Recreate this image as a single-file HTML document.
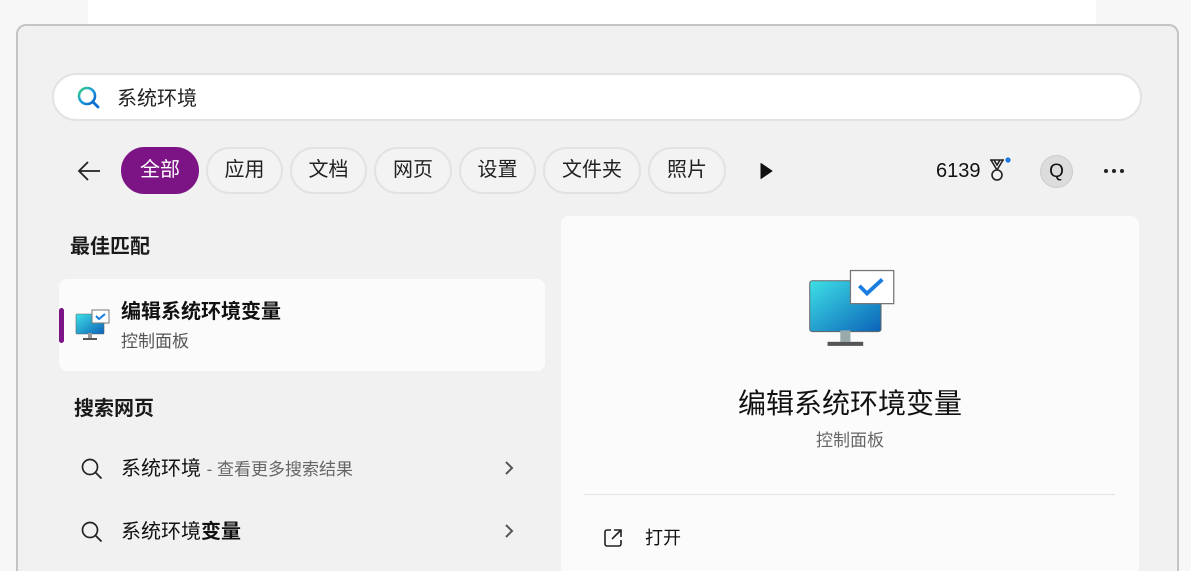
<!DOCTYPE html>
<html><head><meta charset="utf-8"><style>
*{margin:0;padding:0;box-sizing:border-box}
html,body{width:1191px;height:571px;overflow:hidden}
body{background:#f7f7f7;font-family:"Liberation Sans","Noto Sans CJK SC",sans-serif;position:relative;color:#1a1a1a}
.abs{position:absolute}
.topwhite{left:88px;top:0;width:1008px;height:24px;background:#fff}
.panel{left:16px;top:24px;width:1163px;height:547px;background:#f1f1f1;border:2px solid #c4c4c4;border-bottom:none;border-radius:10px 10px 0 0}
.search{left:52px;top:73px;width:1090px;height:48px;background:#fff;border:2px solid #e3e3e3;border-radius:24px}
.chip{top:147px;height:47px;border:2px solid #e2e2e2;border-radius:24px;background:#f3f3f3;font-size:20px;line-height:43px;text-align:center;color:#222}
.card{background:#fbfbfb;border-radius:8px}
.h{font-weight:bold;font-size:20px}
</style></head><body>
<div class="abs topwhite"></div>
<div class="abs panel"></div>
<div class="abs search"></div>
<svg class="abs" style="left:76px;top:85px" width="26" height="26" viewBox="0 0 26 26"><defs><linearGradient id="sg" x1="0" y1="0" x2="1" y2="1"><stop offset="0" stop-color="#3ad17a"/><stop offset="0.5" stop-color="#1a9ae0"/><stop offset="1" stop-color="#0a5fc0"/></linearGradient></defs><circle cx="11" cy="11" r="8" fill="none" stroke="url(#sg)" stroke-width="2.6"/><path d="M17 17l5 5" stroke="#0a6fd0" stroke-width="2.8" stroke-linecap="round"/></svg>
<div class="abs" style="left:117px;top:82px;font-size:20px;color:#222">系统环境</div>

<svg class="abs" style="left:76px;top:158px" width="26" height="26" viewBox="0 0 26 26"><path d="M24 13H3M12 4l-9 9 9 9" fill="none" stroke="#222" stroke-width="1.8"/></svg>
<div class="abs chip" style="left:121px;width:78px;background:#7c1486;border-color:#7c1486;color:#fff">全部</div>
<div class="abs chip" style="left:206px;width:77px">应用</div>
<div class="abs chip" style="left:290px;width:77px">文档</div>
<div class="abs chip" style="left:374px;width:78px">网页</div>
<div class="abs chip" style="left:459px;width:77px">设置</div>
<div class="abs chip" style="left:543px;width:98px">文件夹</div>
<div class="abs chip" style="left:648px;width:78px">照片</div>
<svg class="abs" style="left:759px;top:162px" width="16" height="18" viewBox="0 0 16 18"><path d="M2 1.5L13 9 2 16.5z" fill="#111" stroke="#111" stroke-linejoin="round"/></svg>
<div class="abs" style="left:936px;top:160px;font-size:20px;color:#111">6139</div>
<svg class="abs" style="left:988px;top:157px" width="24" height="26" viewBox="0 0 24 26"><path d="M2 3h14M3 3l6 10M15 3l-6 10M6 3l3 5 3-5" fill="none" stroke="#222" stroke-width="1.6"/><circle cx="9" cy="18" r="5" fill="none" stroke="#222" stroke-width="1.6"/><circle cx="20" cy="3" r="2.6" fill="#1a78e0"/></svg>
<div class="abs" style="left:1040px;top:155px;width:33px;height:33px;border-radius:50%;background:#dcdcdc;border:1px solid #ccc;font-size:19px;line-height:31px;text-align:center;color:#111">Q</div>
<svg class="abs" style="left:1102px;top:168px" width="24" height="6" viewBox="0 0 24 6"><circle cx="4" cy="3" r="2" fill="#222"/><circle cx="12" cy="3" r="2" fill="#222"/><circle cx="20" cy="3" r="2" fill="#222"/></svg>

<div class="abs h" style="left:70px;top:230px">最佳匹配</div>
<div class="abs card" style="left:59px;top:279px;width:486px;height:92px"></div>
<div class="abs" style="left:59px;top:308px;width:5px;height:35px;background:#7c1486;border-radius:3px"></div>
<svg class="abs" style="left:75px;top:309px" width="36" height="33" viewBox="0 0 36 33"><defs><linearGradient id="mg" x1="0" y1="0" x2="1" y2="1"><stop offset="0" stop-color="#3ee0e6"/><stop offset="1" stop-color="#0b62b8"/></linearGradient></defs><rect x="1" y="5" width="28" height="20" rx="1" fill="url(#mg)" stroke="#666" stroke-width="0.6"/><rect x="13" y="24" width="4" height="5" fill="#999"/><rect x="8" y="29" width="14" height="2" fill="#555"/><rect x="17" y="1" width="17" height="13" fill="#fff" stroke="#777"/><path d="M21 7l3 3 6-5" fill="none" stroke="#1a7de0" stroke-width="2"/></svg>
<div class="abs h" style="left:121px;top:295px;color:#111">编辑系统环境变量</div>
<div class="abs" style="left:121px;top:327px;font-size:17px;color:#555">控制面板</div>

<div class="abs h" style="left:74px;top:392px">搜索网页</div>
<svg class="abs" style="left:80px;top:457px" width="24" height="24" viewBox="0 0 24 24"><circle cx="10" cy="10" r="7.5" fill="none" stroke="#222" stroke-width="1.7"/><path d="M15.5 15.5l6 6" stroke="#222" stroke-width="1.8"/></svg>
<div class="abs" style="left:121px;top:452px;font-size:20px;color:#111">系统环境 <span style="font-size:17px;color:#666">- 查看更多搜索结果</span></div>
<svg class="abs" style="left:502px;top:459px" width="14" height="18" viewBox="0 0 14 18"><path d="M4 3l6 6-6 6" fill="none" stroke="#555" stroke-width="2"/></svg>
<svg class="abs" style="left:80px;top:520px" width="24" height="24" viewBox="0 0 24 24"><circle cx="10" cy="10" r="7.5" fill="none" stroke="#222" stroke-width="1.7"/><path d="M15.5 15.5l6 6" stroke="#222" stroke-width="1.8"/></svg>
<div class="abs" style="left:121px;top:515px;font-size:20px;color:#111">系统环境<b>变量</b></div>
<svg class="abs" style="left:502px;top:522px" width="14" height="18" viewBox="0 0 14 18"><path d="M4 3l6 6-6 6" fill="none" stroke="#555" stroke-width="2"/></svg>

<div class="abs card" style="left:561px;top:216px;width:578px;height:355px;border-radius:8px 8px 0 0"></div>
<svg class="abs" style="left:806px;top:268px" width="94" height="84" viewBox="0 0 36 33"><rect x="1" y="5" width="28" height="20" rx="1" fill="url(#mg)" stroke="#666" stroke-width="0.4"/><rect x="13" y="24.5" width="4" height="4.5" fill="#9aa"/><rect x="8" y="29" width="14" height="1.6" fill="#555"/><rect x="17" y="1" width="17" height="13" fill="#fff" stroke="#777" stroke-width="0.5"/><path d="M20.5 7l3 3 6-5.5" fill="none" stroke="#1a7de0" stroke-width="1.5"/></svg>
<div class="abs" style="left:561px;top:382px;width:578px;text-align:center;font-size:28px;color:#111">编辑系统环境变量</div>
<div class="abs" style="left:561px;top:426px;width:578px;text-align:center;font-size:17px;color:#666">控制面板</div>
<div class="abs" style="left:584px;top:494px;width:531px;height:1px;background:#e3e3e3"></div>
<svg class="abs" style="left:602px;top:527px" width="22" height="22" viewBox="0 0 22 22"><path d="M9 3H5a2 2 0 0 0-2 2v12a2 2 0 0 0 2 2h12a2 2 0 0 0 2-2v-4M12 3h7v7M19 3l-9 9" fill="none" stroke="#222" stroke-width="1.6"/></svg>
<div class="abs" style="left:645px;top:524px;font-size:18px;color:#111">打开</div>
</body></html>
